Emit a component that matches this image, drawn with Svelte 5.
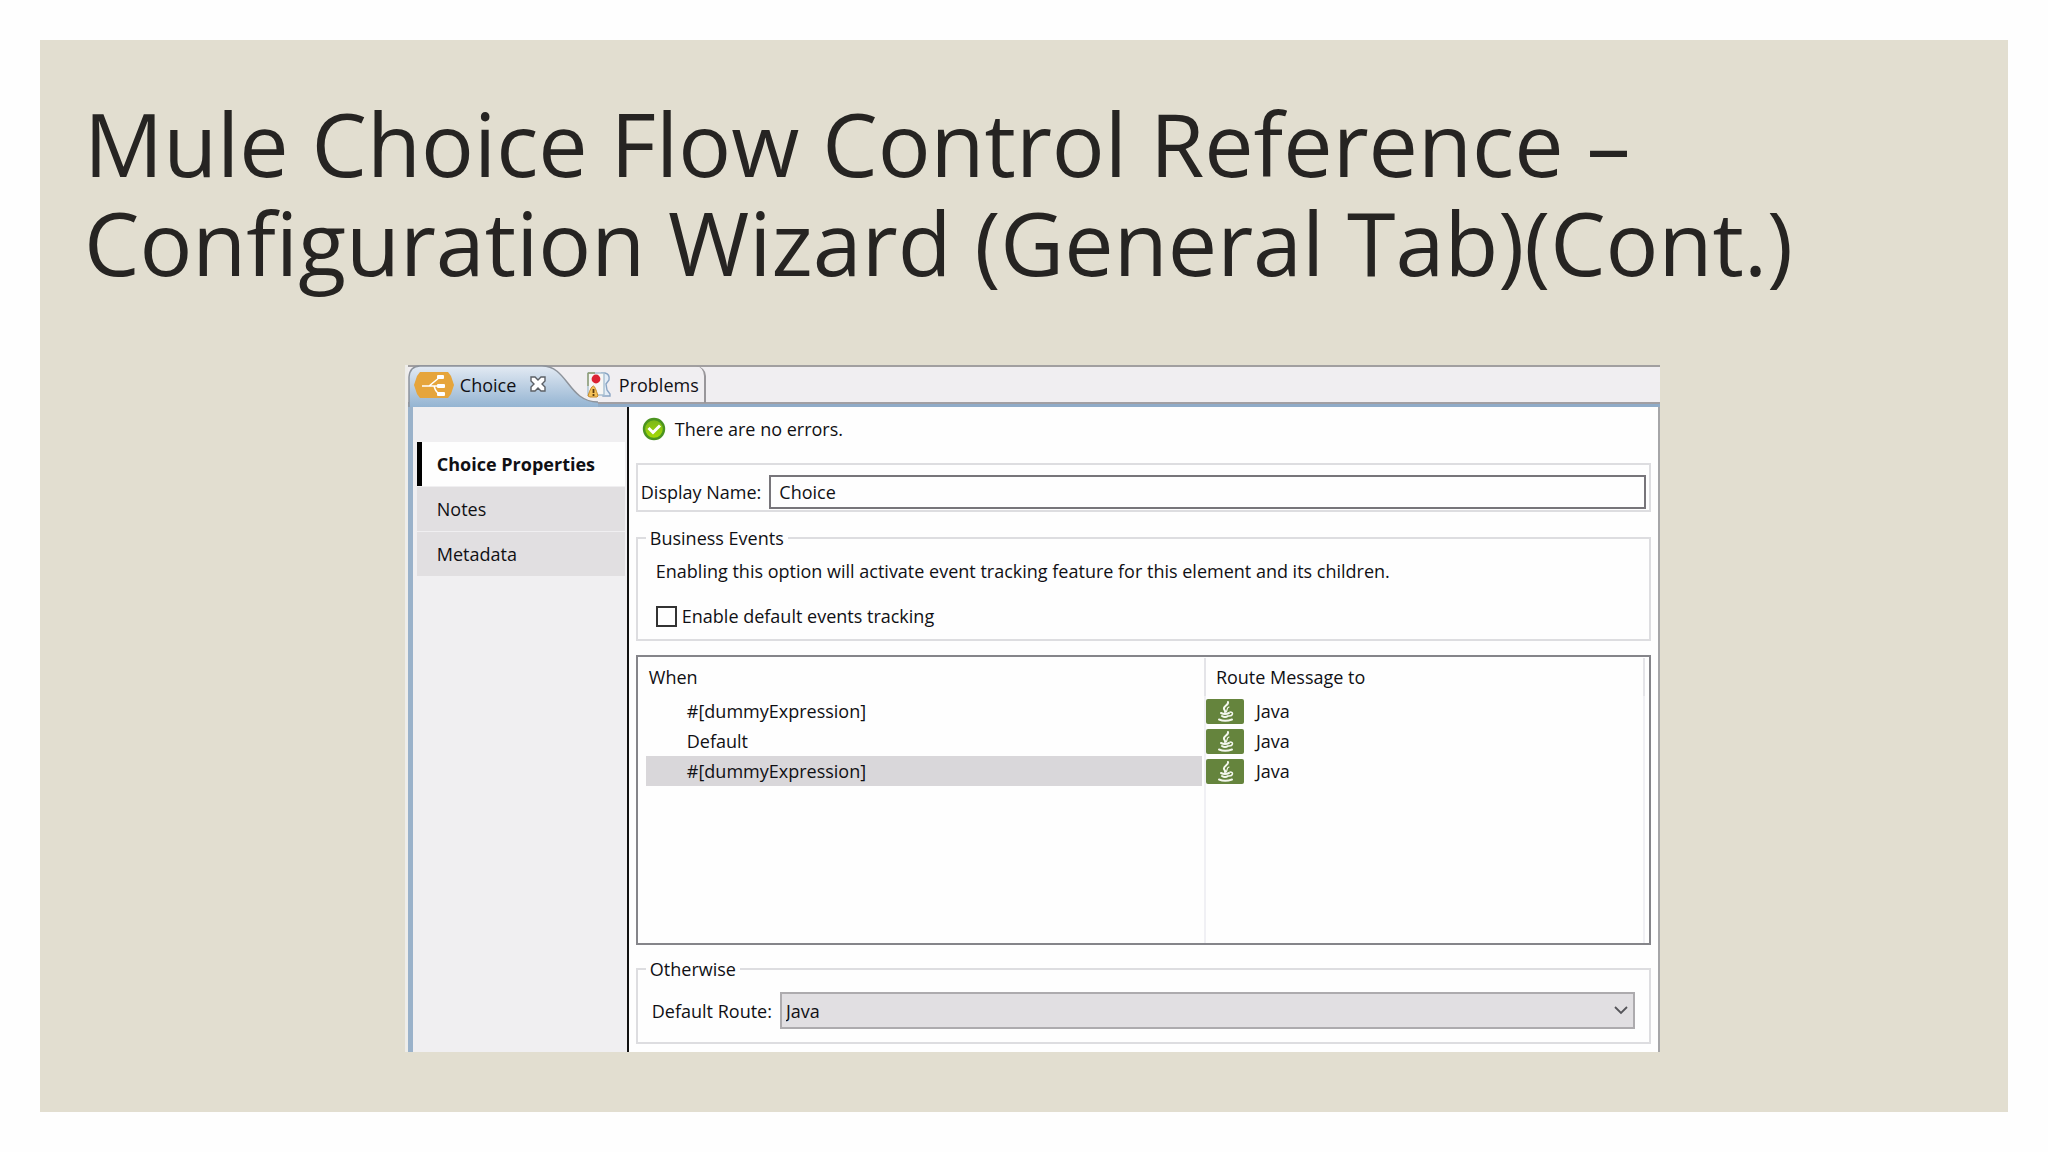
<script>
  let activeSection = $state('Choice Properties');
  let displayName = $state('Choice');
  let tracking = $state(false);
  let defaultRoute = $state('Java');
  let selected = $state(2);

  const sections = ['Choice Properties', 'Notes', 'Metadata'];
  const routes = [
    { when: '#[dummyExpression]', target: 'Java' },
    { when: 'Default', target: 'Java' },
    { when: '#[dummyExpression]', target: 'Java' }
  ];
</script>

<main class="slide">
  <h1>Mule Choice Flow Control Reference –<br />Configuration Wizard (General Tab)(Cont.)</h1>

  <div class="stage">
    <section class="window">
      <div class="tabs" role="tablist">
        <div class="tab-choice">
          <svg class="tab-shape" viewBox="0 0 190 42" preserveAspectRatio="none" aria-hidden="true">
            <defs>
              <linearGradient id="tabfill" x1="0" y1="0" x2="0" y2="1">
                <stop offset="0" stop-color="#e3eaf3" />
                <stop offset="1" stop-color="#94b4d2" />
              </linearGradient>
            </defs>
            <path d="M1 42V12Q2 1 12 1H134C160 1 160 37 190 37V42Z" fill="url(#tabfill)" />
            <path d="M1 42V12Q2 1 12 1H134C160 1 160 37 190 37" fill="none" stroke="#8d939b" stroke-width="1.5" />
          </svg>
          <button class="tab" role="tab" aria-selected="true">
            <svg width="40" height="26" viewBox="0 0 40 26" aria-hidden="true">
              <path d="M6 0H34L37 4L40 13L37 22L34 26H6L3 22L0 13L3 4Z" fill="#e6a53c" />
              <path d="M8 14H15L26 5M15 14H26M20 14Q22 21 26 22" stroke="#fff" stroke-width="1.5" fill="none" />
              <rect x="23" y="3" width="7" height="4" rx="1" fill="#fff" />
              <rect x="23" y="12" width="8" height="4" rx="1" fill="#fff" />
              <rect x="23" y="20" width="8" height="4" rx="1" fill="#fff" />
            </svg>
            <span>Choice</span>
          </button>
          <button class="close" aria-label="Close Choice">
            <svg width="18" height="18" viewBox="0 0 18 18" aria-hidden="true">
              <path d="M2 2H6L9 5L12 2H16V6L13 9L16 12V16H12L9 13L6 16H2V12L5 9L2 6Z" fill="#fff" stroke="#5c6066" stroke-width="1.4" />
            </svg>
          </button>
        </div>
        <button class="tab tab-problems" role="tab" aria-selected="false">
          <svg width="24" height="26" viewBox="0 0 24 26" aria-hidden="true">
            <path d="M14 1H18Q23 2 22 8L19 12L20 18L23 22V24H16V16" fill="#e4edf7" stroke="#8aa5c4" stroke-width="1.4" />
            <path d="M1 1H17V23H1Z" fill="#f7f6f4" stroke="#a9c0d2" stroke-width="1.4" />
            <path d="M1 1V14M1 1H8" stroke="#8f9c6e" stroke-width="1.4" />
            <circle cx="9" cy="7" r="4.4" fill="#dc2233" />
            <path d="M6.500 14Q8 14 11 24L10 25H3L1 24Q4 14 6.500 14Z" fill="#f4c159" stroke="#c68a2b" />
            <path d="M6.500 17V21M6.500 22V24" stroke="#5b3c10" stroke-width="1.8" />
          </svg>
          <span>Problems</span>
        </button>
      </div>

      <div class="body">
        <nav class="sidebar" aria-label="Sections">
          {#each sections as section}
            <button
              class="section"
              class:active={section === activeSection}
              onclick={() => (activeSection = section)}>{section}</button>
          {/each}
        </nav>

        <form class="content" onsubmit={(e) => e.preventDefault()}>
          <div class="status">
            <svg width="24" height="24" viewBox="0 0 24 24" aria-hidden="true">
              <defs>
                <linearGradient id="okfill" x1="0" y1="0" x2="0" y2="1">
                  <stop offset="0" stop-color="#79b51c" />
                  <stop offset="1" stop-color="#a6dc05" />
                </linearGradient>
              </defs>
              <circle cx="12" cy="12" r="10" fill="url(#okfill)" stroke="#4b9420" stroke-width="2.400" />
              <path d="M6.500 11L11 15.500L18 8.500" fill="none" stroke="#fff" stroke-width="3" />
            </svg>
            <span>There are no errors.</span>
          </div>

          <div class="box name-row">
            <label for="display-name">Display Name:</label>
            <input id="display-name" type="text" bind:value={displayName} />
          </div>

          <fieldset class="box events">
            <legend>Business Events</legend>
            <p>Enabling this option will activate event tracking feature for this element and its children.</p>
            <label class="check">
              <input type="checkbox" bind:checked={tracking} />
              <span>Enable default events tracking</span>
            </label>
          </fieldset>

          <div class="grid-frame">
            <table>
              <thead>
                <tr><th scope="col" class="when">When</th><th scope="col">Route Message to</th></tr>
              </thead>
              <tbody>
                {#each routes as route, i}
                  <tr class:selected={i === selected} onclick={() => (selected = i)}>
                    <td class="when"><div class="expr">{route.when}</div></td>
                    <td>
                      <div class="target">
                        <svg width="38" height="25" viewBox="0 0 38 25" aria-hidden="true">
                          <rect width="38" height="25" rx="2" fill="#65843d" />
                          <g fill="none" stroke="#f4f7ee" stroke-linecap="round">
                            <path d="M22 3C23 6 17 7 18 10C18 11 20 12 19 13" stroke-width="2" />
                            <path d="M23 8C20 9 22 11 20 13" stroke-width="1.2" />
                            <path d="M15 14Q19 16 23 14M16 17Q19 19 22 17" stroke-width="2" />
                            <path d="M24 13C28 13 27 17 23 17" stroke-width="1.4" />
                            <path d="M13 20.500Q19 23 26 20.500" stroke-width="2" />
                          </g>
                        </svg>
                        <span>{route.target}</span>
                      </div>
                    </td>
                  </tr>
                {/each}
                <tr class="rest"><td class="when"></td><td></td></tr>
              </tbody>
            </table>
          </div>

          <fieldset class="box otherwise">
            <legend>Otherwise</legend>
            <div class="route-row">
              <label for="default-route">Default Route:</label>
              <div class="select">
                <select id="default-route" bind:value={defaultRoute}>
                  <option>Java</option>
                </select>
                <svg width="14" height="9" viewBox="0 0 14 9" aria-hidden="true">
                  <path d="M1 1L7 7L13 1" fill="none" stroke="#55555a" stroke-width="1.800" />
                </svg>
              </div>
            </div>
          </fieldset>
        </form>
      </div>
    </section>
  </div>
</main>

<style>
  :global(body) {
    margin: 0;
    background: #fefefe;
  }

  * {
    box-sizing: border-box;
  }

  .slide {
    min-height: calc(100vh - 80px);
    margin: 40px;
    padding: 54px 0 60px;
    background: #e2ded0;
    font-family: 'Open Sans', 'Noto Sans', sans-serif;
    font-size: 18px;
    line-height: 24px;
    color: #101014;
  }

  h1 {
    margin: 0 0 73px;
    padding-left: 44px;
    font-size: 88px;
    line-height: 99px;
    font-weight: 400;
    color: #262422;
  }

  .stage {
    display: grid;
    grid-template-columns: 365fr 1256fr 348fr;
  }

  .window {
    grid-column: 2;
    padding-left: 3px;
    background: #eeedea;
  }

  button,
  input,
  select {
    font: inherit;
    color: inherit;
  }

  button {
    border: 0;
    background: none;
    padding: 0;
    cursor: pointer;
  }

  .tabs {
    display: flex;
    height: 42px;
    border-top: 2px solid #a19fa0;
    background: linear-gradient(#f0eef1 35px, #a19fa3 35px, #a19fa3 37px, #8fabc8 37px);
  }

  .tab-choice {
    display: grid;
    grid-template-columns: auto 1fr;
    align-items: center;
    width: 190px;
    margin-top: -2px;
    padding-left: 6px;
  }

  .tab-shape {
    grid-area: 1 / 1 / 2 / 3;
    width: 190px;
    height: 42px;
    margin-left: -6px;
  }

  .tab-choice .tab {
    grid-area: 1 / 1;
    z-index: 1;
    padding-bottom: 2px;
  }

  .close {
    grid-area: 1 / 2;
    z-index: 1;
    justify-self: start;
    margin-left: 13px;
    margin-bottom: 4px;
    height: 18px;
    line-height: 0;
  }

  .tab {
    display: flex;
    align-items: center;
    gap: 6px;
  }

  .tab-problems {
    height: 37px;
    margin-top: -1px;
    margin-left: -11px;
    padding-right: 5px;
    border-right: 2px solid #98969a;
    border-top-right-radius: 10px;
    gap: 8px;
    z-index: 1;
  }

  .body {
    display: grid;
    grid-template-columns: 221px 1fr;
    border-left: 5px solid #9ab2ca;
    border-right: 2px solid #a6a6a8;
    background: #fefefe;
  }

  .sidebar {
    display: flex;
    flex-direction: column;
    gap: 1px;
    padding: 35px 2px 0 4px;
    margin-right: 5px;
    border-right: 2px solid #111;
    background: #f0eff1;
  }

  .section {
    height: 44px;
    padding-left: 20px;
    text-align: left;
    background: #e1dfe1;
  }

  .section.active {
    padding-left: 15px;
    border-left: 5px solid #000;
    background: #fefefe;
    font-weight: 700;
  }

  .content {
    padding: 4px 7px 8px 2px;
  }

  .status {
    display: flex;
    align-items: center;
    gap: 9px;
    height: 36px;
    padding-left: 6px;
    margin-bottom: 16px;
  }

  .box {
    margin: 0;
    border: 2px solid #dddde0;
  }

  .name-row {
    display: flex;
    align-items: center;
    gap: 8px;
    height: 49px;
    padding: 8px 3px 0 3px;
    margin-bottom: 14px;
  }

  .name-row input {
    flex: 1;
    min-width: 0;
    height: 34px;
    padding: 0 8px;
    border: 2px solid #77757a;
    background: #fefefe;
  }

  legend {
    margin-left: 8px;
    padding: 0 4px;
  }

  .events {
    height: 115px;
    padding: 9px 0 0;
    margin-bottom: 14px;
  }

  .events p {
    margin: 0 18px 21px;
  }

  .check {
    display: flex;
    align-items: center;
    gap: 5px;
    margin-left: 18px;
  }

  .check input {
    appearance: none;
    width: 21px;
    height: 21px;
    margin: 0;
    border: 2px solid #333;
    background: #fefefe;
  }

  .check input:checked {
    background: #333;
  }

  .grid-frame {
    padding: 1px 4px 0 8px;
    border: 2px solid #85858a;
    margin-bottom: 12px;
  }

  table {
    width: 100%;
    table-layout: fixed;
    border-collapse: collapse;
  }

  th,
  td {
    padding: 0;
    text-align: left;
    font-weight: 400;
    border-right: 2px solid #f0f0f4;
  }

  th {
    height: 38px;
    padding-left: 10px;
    border-right-color: #e4e4e8;
  }

  th.when {
    width: 56%;
    padding-left: 3px;
  }

  td.when {
    padding-right: 2px;
  }

  .expr {
    height: 30px;
    padding-left: 41px;
    line-height: 30px;
  }

  .selected .expr {
    background: #d9d7da;
  }

  .target {
    display: flex;
    align-items: center;
    gap: 12px;
    height: 30px;
  }

  .rest td {
    height: 157px;
  }

  .otherwise {
    height: 87px;
    padding: 11px 0 0;
  }

  .route-row {
    display: flex;
    align-items: center;
    gap: 8px;
    padding: 0 14px;
  }

  .select {
    flex: 1;
    display: grid;
    align-items: center;
  }

  .select select {
    grid-area: 1 / 1;
    appearance: none;
    width: 100%;
    height: 37px;
    padding: 0 4px;
    border: 2px solid #adabae;
    border-radius: 0;
    background: #e1dfe2;
  }

  .select svg {
    grid-area: 1 / 1;
    justify-self: end;
    margin-right: 7px;
    pointer-events: none;
  }
</style>
